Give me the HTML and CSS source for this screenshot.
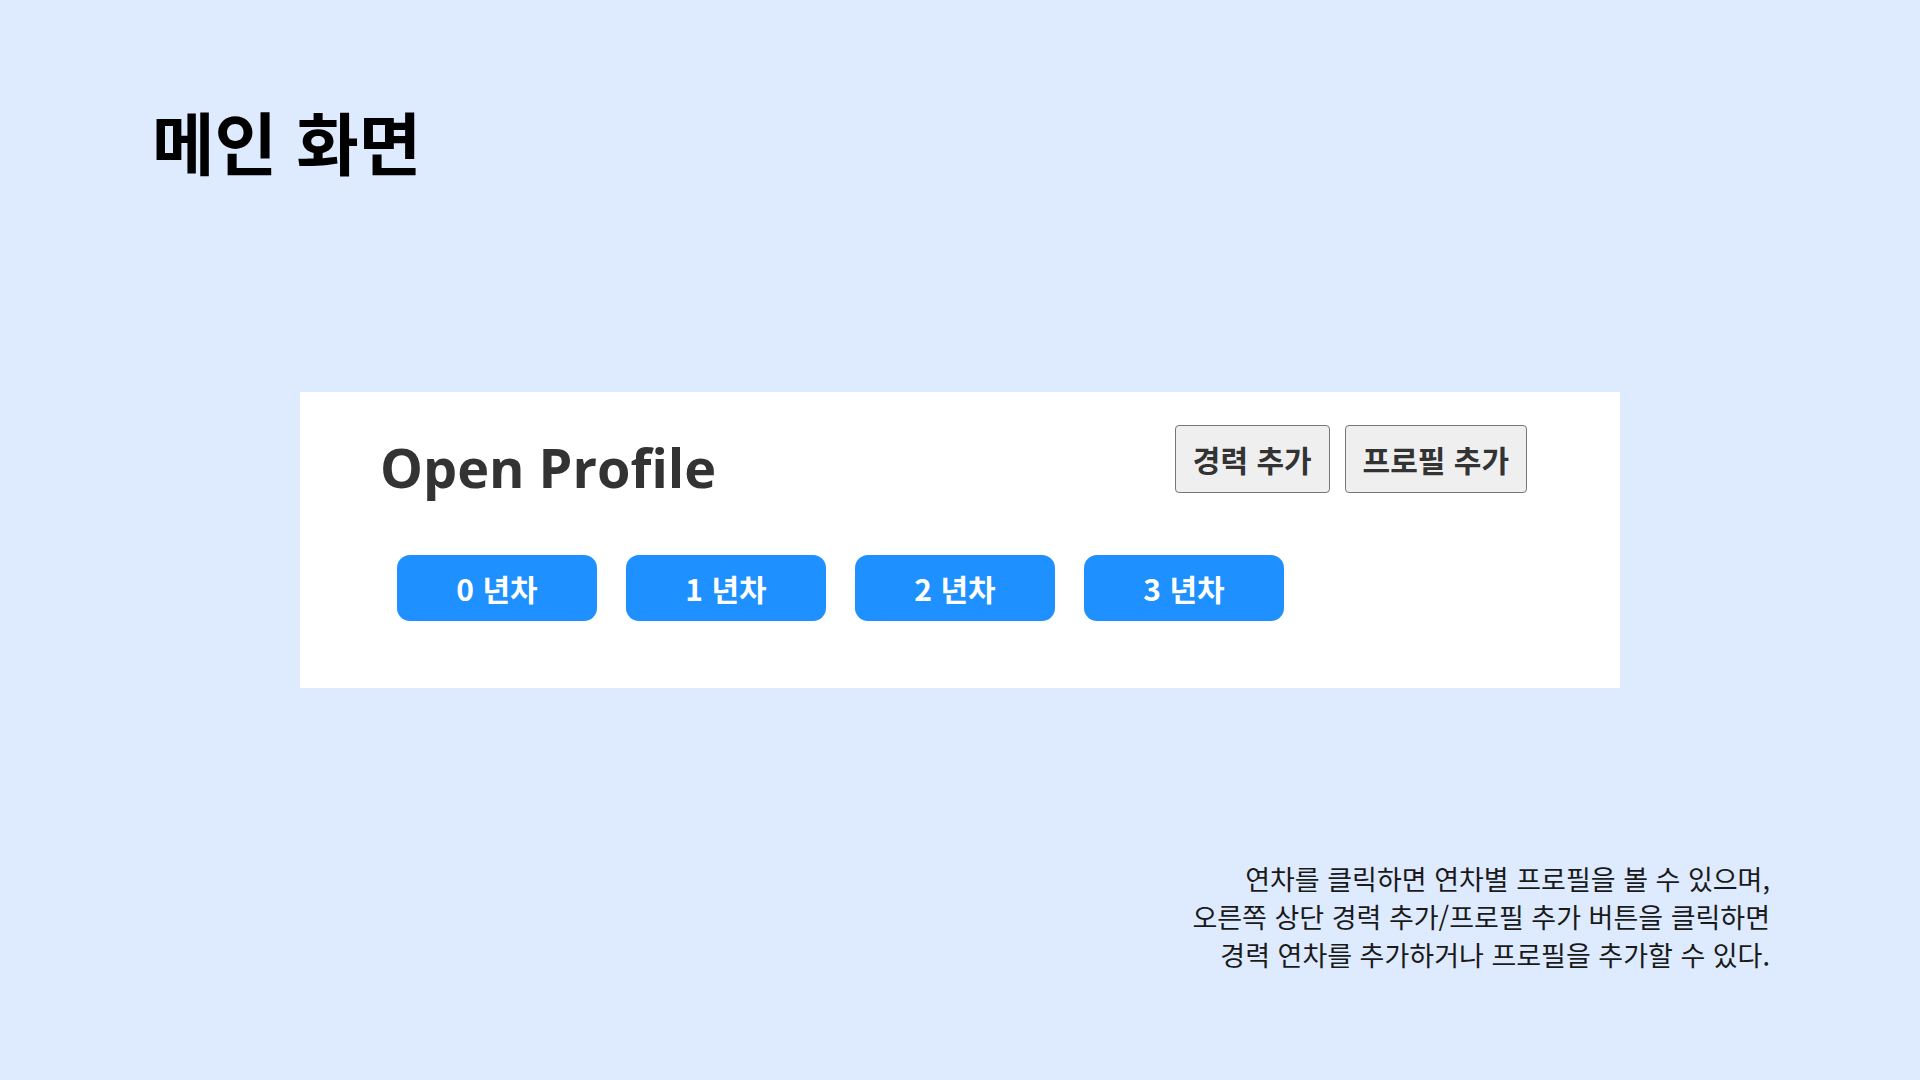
FILE: index.html
```html
<!DOCTYPE html>
<html lang="ko">
<head>
<meta charset="utf-8">
<title>메인 화면</title>
<link rel="stylesheet" href="styles.css">
</head>
<body>
<main class="slide">
  <h1 class="slide-title">메인 화면</h1>

  <section class="card">
    <header class="card-head">
      <h2 class="card-title">Open Profile</h2>
      <div class="head-actions">
        <button class="btn-plain" type="button">경력 추가</button>
        <button class="btn-plain" type="button">프로필 추가</button>
      </div>
    </header>
    <div class="year-list">
      <button class="btn-year" type="button">0 년차</button>
      <button class="btn-year" type="button">1 년차</button>
      <button class="btn-year" type="button">2 년차</button>
      <button class="btn-year" type="button">3 년차</button>
    </div>
  </section>

  <p class="note">연차를 클릭하면 연차별 프로필을 볼 수 있으며,<br>오른쪽 상단 경력 추가/프로필 추가 버튼을 클릭하면<br>경력 연차를 추가하거나 프로필을 추가할 수 있다.</p>
</main>
</body>
</html>
```
FILE: styles.css
```css
html, body {
  margin: 0;
  padding: 0;
}

body {
  width: 1920px;
  height: 1080px;
  overflow: hidden;
  background: #deeafe;
  font-family: "Noto Sans CJK KR", "Noto Sans", sans-serif;
  color: #000;
}

.slide {
  display: flex;
  flex-direction: column;
}

.slide-title {
  margin: 101px 0 0 152px;
  font-size: 68px;
  line-height: 80px;
  font-weight: 700;
  color: #000;
}

.card {
  margin: 211px 0 0 300px;
  width: 1320px;
  height: 296px;
  box-sizing: border-box;
  background: #fff;
  padding: 33px 93px 0 80px;
  display: flex;
  flex-direction: column;
}

.card-head {
  display: flex;
  justify-content: space-between;
  align-items: flex-start;
}

.card-title {
  margin: 6px 0 0 0;
  font-family: "Open Sans", "Noto Sans", sans-serif;
  font-size: 54px;
  line-height: 72px;
  font-weight: 700;
  color: #333;
}

.head-actions {
  display: flex;
  gap: 15px;
}

.btn-plain {
  height: 68px;
  padding: 0 17px;
  background: #efefef;
  border: 1.5px solid #767676;
  border-radius: 4px;
  font-family: "Noto Sans CJK KR", sans-serif;
  font-size: 30px;
  font-weight: 700;
  color: #333;
}

.year-list {
  display: flex;
  gap: 29px;
  margin: 52px 0 0 17px;
}

.btn-year {
  width: 200px;
  height: 66px;
  border: none;
  border-radius: 13px;
  background: #1e90ff;
  color: #fff;
  font-family: "Noto Sans CJK KR", sans-serif;
  font-size: 30px;
  font-weight: 700;
}

.note {
  align-self: flex-end;
  margin: 172px 150px 0 0;
  text-align: right;
  font-size: 27px;
  line-height: 38px;
  color: #1a1a1a;
}
```
